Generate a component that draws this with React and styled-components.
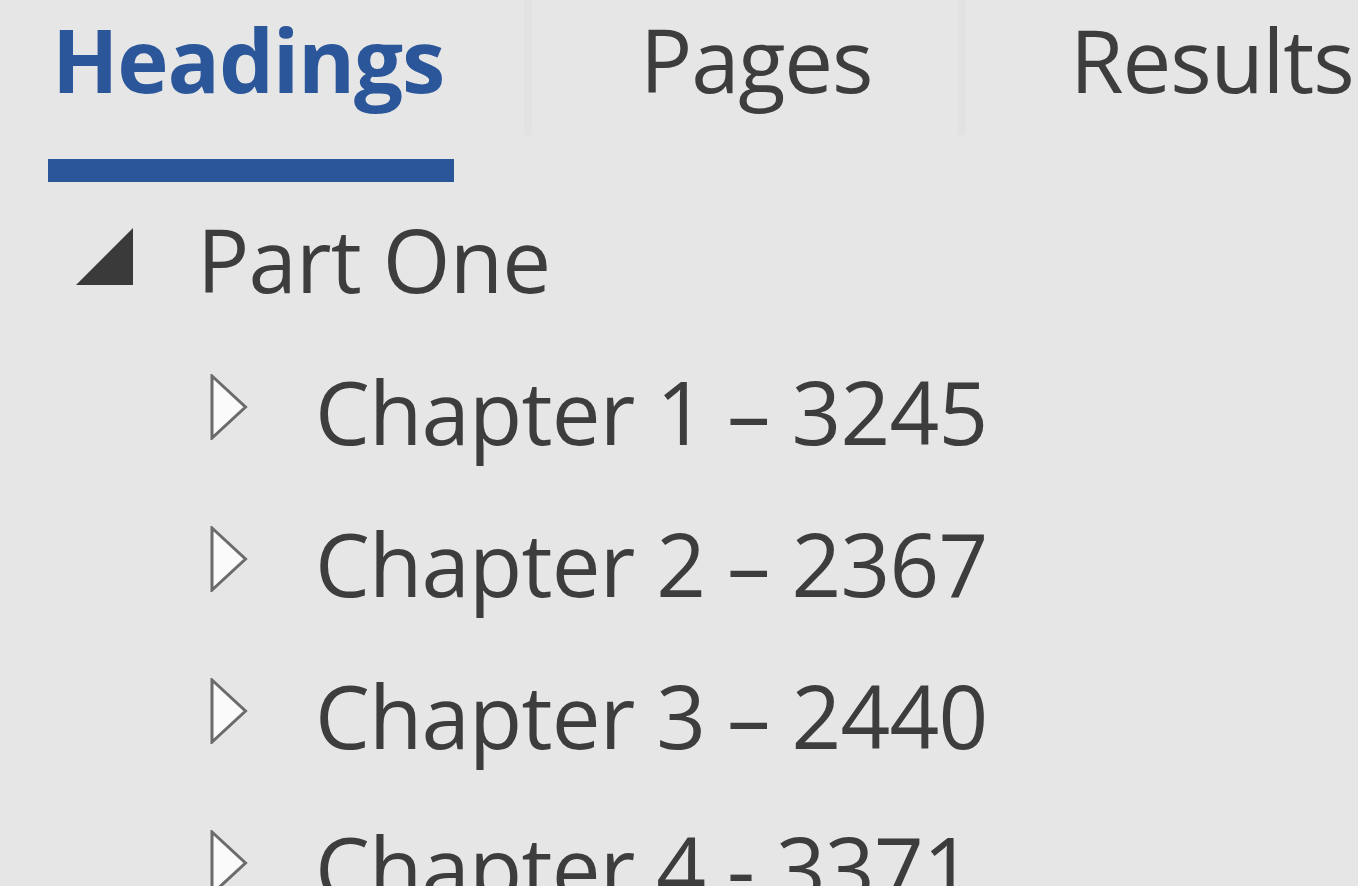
import React from "react";
import styled, { createGlobalStyle } from "styled-components";

const GlobalStyle = createGlobalStyle`
  html, body {
    margin: 0;
    padding: 0;
    background: #e6e6e6;
  }
  body {
    font-family: "Open Sans", "Noto Sans", sans-serif;
  }
`;

const tabs = [
  { label: "Headings", active: true },
  { label: "Pages" },
  { label: "Results" },
];

const headings = [
  { title: "Part One", level: 1, open: true },
  { title: "Chapter 1 \u2013 3245", level: 2 },
  { title: "Chapter 2 \u2013 2367", level: 2 },
  { title: "Chapter 3 \u2013 2440", level: 2 },
  { title: "Chapter 4 - 3371", level: 2 },
];

export default function App() {
  return (
    <>
      <GlobalStyle />
      <Pane>
        <TabBar>
          {tabs.map((t) => (
            <Tab key={t.label}>
              <TabLabel $active={t.active}>{t.label}</TabLabel>
              {t.active && <ActiveBar />}
            </Tab>
          ))}
        </TabBar>
        <Tree>
          {headings.map((h) => (
            <Row key={h.title} $level={h.level}>
              <Toggle $level={h.level}>
                {h.open ? (
                  <svg width="57" height="57" viewBox="0 0 57 57">
                    <path d="M57 0 L57 57 L0 57 Z" fill="#3a3a3a" />
                  </svg>
                ) : (
                  <svg width="38" height="66" viewBox="0 0 38 66">
                    <path
                      d="M2 2 L35.5 33 L2 64 Z"
                      fill="#fafafa"
                      stroke="#6b6b6b"
                      strokeWidth="3"
                      strokeLinejoin="miter"
                    />
                  </svg>
                )}
              </Toggle>
              <Title>{h.title}</Title>
            </Row>
          ))}
        </Tree>
      </Pane>
    </>
  );
}

const Pane = styled.div`
  width: 1358px;
  height: 886px;
  overflow: hidden;
  background: #e6e6e6;
  color: #3d3d3d;
`;

const TabBar = styled.div`
  display: flex;
  align-items: flex-start;
  height: 183px;
`;

const Tab = styled.div`
  box-sizing: border-box;
  display: flex;
  flex-direction: column;
  align-items: flex-start;
  flex: none;

  &:nth-child(1) {
    width: 524px;
    padding-left: 48px;
  }
  &:nth-child(2) {
    width: 434px;
    height: 135px;
    padding-left: 104px;
    border-left: 8px solid #e2e2e2;
  }
  &:nth-child(3) {
    width: 400px;
    height: 135px;
    padding-left: 100px;
    border-left: 8px solid #e2e2e2;
  }
`;

const TabLabel = styled.span`
  display: block;
  padding: 0 4px;
  font-size: 87px;
  line-height: normal;
  letter-spacing: -1.2px;
  white-space: nowrap;
  font-weight: ${(p) => (p.$active ? 700 : 400)};
  color: ${(p) => (p.$active ? "#2b579a" : "#3d3d3d")};
`;

const ActiveBar = styled.div`
  margin-top: 41px;
  width: 406px;
  height: 23px;
  background: #2b579a;
`;

const Tree = styled.div`
  display: flex;
  flex-direction: column;
`;

const Row = styled.div`
  display: flex;
  align-items: center;
  height: 152px;
  padding-left: ${(p) => (p.$level === 1 ? 76 : 210)}px;
`;

const Toggle = styled.div`
  display: flex;
  align-items: center;
  width: ${(p) => (p.$level === 1 ? 121 : 105)}px;
  margin-top: ${(p) => (p.$level === 1 ? -6 : -8)}px;
  flex: none;

  svg {
    display: block;
  }
`;

const Title = styled.span`
  font-size: 87px;
  line-height: 152px;
  letter-spacing: -0.8px;
  white-space: nowrap;
  color: #3d3d3d;
`;
